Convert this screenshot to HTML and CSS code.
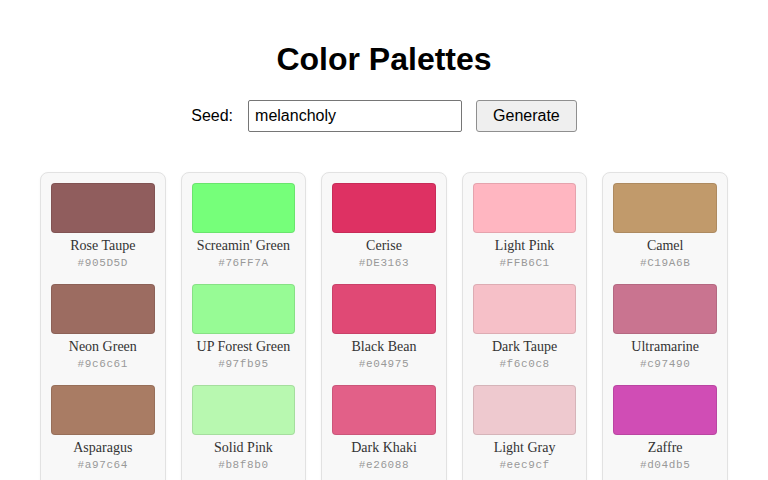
FILE: index.html
```html
<!DOCTYPE html>
<html lang="en">

<head>
    <meta charset="UTF-8">
    <title>Color Palettes</title>
    <link rel="stylesheet" href="styles.css">
</head>

<body>
    <h1>Color Palettes</h1>
    <div class="controls">
        <label for="seed">Seed:</label>
        <input id="seed" type="text" value="melancholy">
        <button>Generate</button>
    </div>

    <div class="palettes">
        <div class="palette">
            <div class="color">
                <div class="swatch" style="background:#905D5D"></div>
                <p class="name">Rose Taupe</p>
                <p class="hex">#905D5D</p>
            </div>
            <div class="color">
                <div class="swatch" style="background:#9c6c61"></div>
                <p class="name">Neon Green</p>
                <p class="hex">#9c6c61</p>
            </div>
            <div class="color">
                <div class="swatch" style="background:#a97c64"></div>
                <p class="name">Asparagus</p>
                <p class="hex">#a97c64</p>
            </div>
        </div>
        <div class="palette">
            <div class="color">
                <div class="swatch" style="background:#76FF7A"></div>
                <p class="name">Screamin' Green</p>
                <p class="hex">#76FF7A</p>
            </div>
            <div class="color">
                <div class="swatch" style="background:#97fb95"></div>
                <p class="name">UP Forest Green</p>
                <p class="hex">#97fb95</p>
            </div>
            <div class="color">
                <div class="swatch" style="background:#b8f8b0"></div>
                <p class="name">Solid Pink</p>
                <p class="hex">#b8f8b0</p>
            </div>
        </div>
        <div class="palette">
            <div class="color">
                <div class="swatch" style="background:#DE3163"></div>
                <p class="name">Cerise</p>
                <p class="hex">#DE3163</p>
            </div>
            <div class="color">
                <div class="swatch" style="background:#e04975"></div>
                <p class="name">Black Bean</p>
                <p class="hex">#e04975</p>
            </div>
            <div class="color">
                <div class="swatch" style="background:#e26088"></div>
                <p class="name">Dark Khaki</p>
                <p class="hex">#e26088</p>
            </div>
        </div>
        <div class="palette">
            <div class="color">
                <div class="swatch" style="background:#FFB6C1"></div>
                <p class="name">Light Pink</p>
                <p class="hex">#FFB6C1</p>
            </div>
            <div class="color">
                <div class="swatch" style="background:#f6c0c8"></div>
                <p class="name">Dark Taupe</p>
                <p class="hex">#f6c0c8</p>
            </div>
            <div class="color">
                <div class="swatch" style="background:#eec9cf"></div>
                <p class="name">Light Gray</p>
                <p class="hex">#eec9cf</p>
            </div>
        </div>
        <div class="palette">
            <div class="color">
                <div class="swatch" style="background:#C19A6B"></div>
                <p class="name">Camel</p>
                <p class="hex">#C19A6B</p>
            </div>
            <div class="color">
                <div class="swatch" style="background:#c97490"></div>
                <p class="name">Ultramarine</p>
                <p class="hex">#c97490</p>
            </div>
            <div class="color">
                <div class="swatch" style="background:#d04db5"></div>
                <p class="name">Zaffre</p>
                <p class="hex">#d04db5</p>
            </div>
        </div>
    </div>
</body>

</html>
```

FILE: styles.css
```css
body {
    margin: 0;
    padding: 20px;
    font-family: "Liberation Sans", Arial, sans-serif;
    color: #000;
    background: #fff;
}

h1 {
    margin: 21px 0 22px;
    font-size: 32px;
    text-align: center;
}

.controls {
    display: flex;
    justify-content: center;
    align-items: center;
    gap: 14px;
    margin-bottom: 40px;
}
.controls label {
    font-size: 16px;
    margin-right: 1px;
}
.controls input {
    width: 214px;
    height: 32px;
    box-sizing: border-box;
    padding: 4px 6px;
    font-family: inherit;
    font-size: 16px;
    border: 1px solid #767676;
    border-radius: 2px;
}
.controls button {
    height: 32px;
    padding: 0 16px;
    font-family: inherit;
    font-size: 16px;
    background: #efefef;
    border: 1px solid #8f8f8f;
    border-radius: 3px;
}

.palettes {
    display: flex;
    justify-content: center;
    gap: 15px;
}

.palette {
    width: 103.6px;
    padding: 10px;
    background: #f8f8f8;
    border: 1px solid #e2e2e2;
    border-radius: 8px;
    box-shadow: 0 1px 3px rgba(0, 0, 0, 0.04);
}

.color {
    margin-bottom: 15px;
    text-align: center;
}
.swatch {
    height: 50px;
    box-sizing: border-box;
    border: 1px solid rgba(0, 0, 0, 0.1);
    border-radius: 4px;
}
.name {
    margin: 5px 0 3px;
    font-family: "Liberation Serif", "Times New Roman", serif;
    font-size: 14px;
    color: #333;
}
.hex {
    margin: 0;
    font-family: "Liberation Mono", "Courier New", monospace;
    font-size: 11px;
    letter-spacing: 0.6px;
    color: #999;
}
```
